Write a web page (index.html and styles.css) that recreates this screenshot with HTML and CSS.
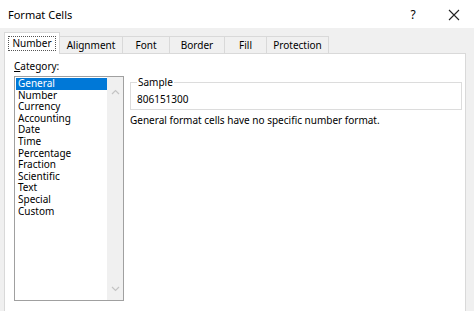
FILE: index.html
```html
<!DOCTYPE html>
<html lang="en">
<head>
    <meta charset="UTF-8">
    <meta name="viewport" content="width=device-width, initial-scale=1.0">
    <title>Format Cells</title>
    <link rel="stylesheet" href="styles.css">
</head>
<body>
    <div class="dialog">
        <!-- Title bar -->
        <div class="titlebar">
            <span class="title">Format Cells</span>
            <span class="help">?</span>
            <span class="close">
                <svg width="12" height="12" viewBox="0 0 12 12">
                    <path d="M1 1 L11 11 M11 1 L1 11" stroke="#222" stroke-width="1.1" fill="none"/>
                </svg>
            </span>
        </div>

        <div class="body">
            <!-- Tabs -->
            <div class="tabs">
                <div class="tab active"><span class="focus">Number</span></div>
                <div class="tab">Alignment</div>
                <div class="tab">Font</div>
                <div class="tab">Border</div>
                <div class="tab">Fill</div>
                <div class="tab">Protection</div>
            </div>

            <div class="panel">
                <div class="left">
                    <div class="label"><u>C</u>ategory:</div>
                    <div class="listbox">
                        <ul class="items">
                            <li class="selected">General</li>
                            <li>Number</li>
                            <li>Currency</li>
                            <li>Accounting</li>
                            <li>Date</li>
                            <li>Time</li>
                            <li>Percentage</li>
                            <li>Fraction</li>
                            <li>Scientific</li>
                            <li>Text</li>
                            <li>Special</li>
                            <li>Custom</li>
                        </ul>
                        <div class="scrollbar">
                            <svg width="9" height="6" viewBox="0 0 9 6">
                                <path d="M1 5 L4.5 1.5 L8 5" stroke="#c4c4c4" stroke-width="1.2" fill="none"/>
                            </svg>
                            <svg width="9" height="6" viewBox="0 0 9 6">
                                <path d="M1 1 L4.5 4.5 L8 1" stroke="#c4c4c4" stroke-width="1.2" fill="none"/>
                            </svg>
                        </div>
                    </div>
                </div>

                <div class="right">
                    <fieldset class="sample">
                        <legend>Sample</legend>
                        <div class="value">806151300</div>
                    </fieldset>
                    <p class="desc">General format cells have no specific number format.</p>
                </div>
            </div>
        </div>
    </div>
</body>
</html>
```

FILE: styles.css
```css
/* General Styles */
body {
    margin: 0;
    font-family: 'Noto Sans', 'Open Sans', sans-serif;
    font-size: 10px;
    color: #000;
    background: #f0f0f0;
}

.dialog {
    width: 474px;
    height: 311px;
    display: flex;
    flex-direction: column;
    overflow: hidden;
}

/* Title Bar */
.titlebar {
    height: 28px;
    background: #fff;
    display: flex;
    align-items: center;
    padding-left: 8px;
    flex-shrink: 0;
}

.title {
    font-size: 11px;
    flex: 1;
}

.help {
    font-size: 12px;
    width: 40px;
    text-align: center;
    margin-right: 1px;
}

.close {
    width: 40px;
    display: flex;
    justify-content: center;
    padding-top: 1px;
}

/* Tabs */
.body {
    flex: 1;
    display: flex;
    flex-direction: column;
    padding: 7px 8px 0 4px;
}

.tabs {
    display: flex;
    height: 18px;
    align-items: flex-end;
    position: relative;
    z-index: 1;
}

.tab {
    height: 17px;
    box-sizing: border-box;
    border: 1px solid #d9d9d9;
    border-bottom: none;
    margin-left: -1px;
    display: flex;
    align-items: center;
    justify-content: center;
    background: #f0f0f0;
    color: #000;
}

.tab:nth-child(2) { width: 64px; }
.tab:nth-child(3) { width: 48px; }
.tab:nth-child(4) { width: 56px; }
.tab:nth-child(5) { width: 43px; }
.tab:nth-child(6) { width: 63px; }

.tab.active {
    margin-left: 0;
    width: 56px;
    background: #fff;
    border-color: #d9d9d9;
    margin-bottom: -1px;
    height: 22px;
}

.focus {
    border: 1px dotted #555;
    padding: 0 3px;
    line-height: 13px;
}

/* Panel */
.panel {
    flex: 1;
    background: #fff;
    border: 1px solid #d9d9d9;
    border-bottom: none;
    display: flex;
    padding: 6px 0 0 9px;
}

.left {
    width: 110px;
    flex-shrink: 0;
}

.label {
    line-height: 13px;
    margin-bottom: 3px;
}

.listbox {
    height: 225px;
    box-sizing: border-box;
    border: 1px solid #a0a0a0;
    display: flex;
}

.items {
    list-style: none;
    margin: 0;
    padding: 1px 0 0 1px;
    flex: 1;
}

.items li {
    line-height: 11.6px;
    height: 11.6px;
    padding-left: 2px;
}

.items li.selected {
    background: #0078d7;
    color: #fff;
}

.scrollbar {
    width: 16px;
    background: #f0f0f0;
    display: flex;
    flex-direction: column;
    justify-content: space-between;
    align-items: center;
    padding: 12px 0 8px;
    box-sizing: border-box;
}

/* Right side */
.right {
    flex: 1;
    padding: 16px 3px 0 6px;
}

.sample {
    margin: 0;
    border: 1px solid #dcdcdc;
    padding: 5px 6px 3px 6px;
}

.sample legend {
    padding: 0 1px;
    margin-left: 0;
    line-height: 12px;
}

.value {
    line-height: 13px;
}

.desc {
    margin: 4px 0 0 0;
    line-height: 13px;
}
```
